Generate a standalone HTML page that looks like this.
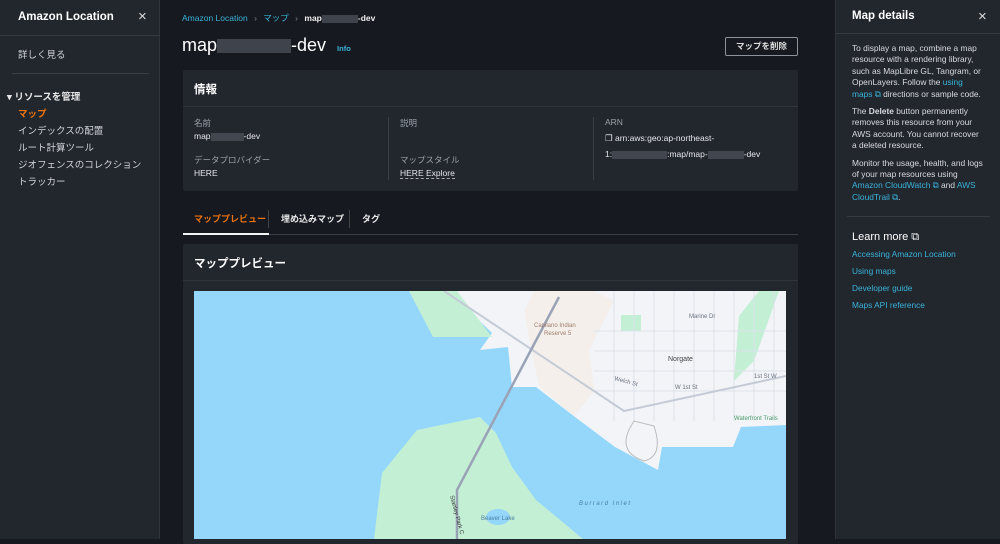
<!DOCTYPE html>
<html><head><meta charset="utf-8">
<style>
*{margin:0;padding:0;box-sizing:border-box}
body{width:1000px;height:539px;overflow:hidden;background:#16191f;font-family:"Liberation Sans","Noto Sans CJK JP",sans-serif;color:#d1d5db;position:relative}
.a{position:absolute;white-space:nowrap}
.side{position:absolute;left:0;top:0;width:160px;height:539px;background:#22262d;border-right:1px solid #2f343b}
.rp{position:absolute;left:835px;top:0;width:165px;height:539px;background:#22262d;border-left:1px solid #2f343b}
.card{position:absolute;background:#22262d;border-radius:2px}
.blur{display:inline-block;background:#4a4f57;height:8px;vertical-align:middle;opacity:.8}
.lk{color:#3ab4db}
.lbl{color:#9aa1ab;font-size:8.5px}
.val{color:#e6e8eb;font-size:8.5px}
</style></head><body>
<div class="side">
 <div class="a" style="left:18px;top:11px;font-size:11.5px;font-weight:bold;color:#fff">Amazon Location</div>
 <div class="a" style="left:138px;top:8px;font-size:15px;color:#ddd">×</div>
 <div class="a" style="left:0;top:35px;width:160px;height:1px;background:#353a42"></div>
 <div class="a" style="left:18px;top:47px;font-size:9.5px">詳しく見る</div>
 <div class="a" style="left:12px;top:73px;width:137px;height:1px;background:#3a3f47"></div>
 <div class="a" style="left:7px;top:89px;font-size:9.5px;font-weight:bold;color:#e8e8e8">▾ リソースを管理</div>
 <div class="a" style="left:18px;top:106px;font-size:9.5px;font-weight:bold;color:#ec7211">マップ</div>
 <div class="a" style="left:18px;top:123px;font-size:9.5px">インデックスの配置</div>
 <div class="a" style="left:18px;top:140px;font-size:9.5px">ルート計算ツール</div>
 <div class="a" style="left:18px;top:157px;font-size:9.5px">ジオフェンスのコレクション</div>
 <div class="a" style="left:18px;top:174px;font-size:9.5px">トラッカー</div>
</div>

<div class="a" style="left:182px;top:12px;font-size:8.5px"><span class="lk">Amazon Location</span> <span style="color:#888;margin:0 4px">›</span> <span class="lk">マップ</span> <span style="color:#888;margin:0 4px">›</span> <span style="color:#eee;font-weight:bold">map<span class="blur" style="width:36px"></span>-dev</span></div>
<div class="a" style="left:182px;top:35px;font-size:18px;color:#fff">map<span class="blur" style="width:74px;height:14px"></span>-dev <span style="font-size:7.5px;color:#3ab4db;font-weight:bold;margin-left:6px">Info</span></div>
<div class="a" style="left:725px;top:37px;width:73px;height:19px;border:1px solid #8d939b;border-radius:2px;font-size:8.5px;font-weight:bold;color:#ddd;text-align:center;line-height:17px">マップを削除</div>

<div class="card" style="left:183px;top:70px;width:615px;height:121px">
 <div class="a" style="left:11px;top:11px;font-size:11.5px;font-weight:bold;color:#fff">情報</div>
 <div class="a" style="left:0;top:36px;width:615px;height:1px;background:#30353c"></div>
 <div class="a lbl" style="left:11px;top:47px">名前</div>
 <div class="a val" style="left:11px;top:61px">map<span class="blur" style="width:33px"></span>-dev</div>
 <div class="a lbl" style="left:11px;top:84px">データプロバイダー</div>
 <div class="a val" style="left:11px;top:98px">HERE</div>
 <div class="a" style="left:205px;top:47px;width:1px;height:63px;background:#3a3f47"></div>
 <div class="a lbl" style="left:217px;top:47px">説明</div>
 <div class="a lbl" style="left:217px;top:84px">マップスタイル</div>
 <div class="a val" style="left:217px;top:98px;border-bottom:1px dashed #aaa">HERE Explore</div>
 <div class="a" style="left:410px;top:47px;width:1px;height:63px;background:#3a3f47"></div>
 <div class="a lbl" style="left:422px;top:47px">ARN</div>
 <div class="a val" style="left:422px;top:63px">❐ arn:aws:geo:ap-northeast-</div>
 <div class="a val" style="left:422px;top:79px">1:<span class="blur" style="width:55px"></span>:map/map-<span class="blur" style="width:36px"></span>-dev</div>
</div>

<div class="a" style="left:194px;top:212px;font-size:9px;font-weight:bold;color:#ec7211">マッププレビュー</div>
<div class="a" style="left:268px;top:210px;width:1px;height:18px;background:#444"></div>
<div class="a" style="left:281px;top:212px;font-size:9px;font-weight:bold;color:#e8e8e8">埋め込みマップ</div>
<div class="a" style="left:349px;top:210px;width:1px;height:18px;background:#444"></div>
<div class="a" style="left:362px;top:212px;font-size:9px;font-weight:bold;color:#e8e8e8">タグ</div>
<div class="a" style="left:183px;top:234px;width:615px;height:1px;background:#3a3f47"></div>
<div class="a" style="left:183px;top:233px;width:86px;height:2px;background:#f2f3f3"></div>

<div class="card" style="left:183px;top:244px;width:615px;height:300px">
 <div class="a" style="left:11px;top:11px;font-size:11.5px;font-weight:bold;color:#fff">マッププレビュー</div>
 <div class="a" style="left:0;top:36px;width:615px;height:1px;background:#30353c"></div>
</div>
<svg class="a" style="left:194px;top:291px" width="592" height="248" viewBox="0 0 592 248">
 <rect width="592" height="248" fill="#94d7fb"/>
 <polygon points="255,0 298,42 286,59 314,56 318,96 342,96 381,126 421,156 464,179 468,156 539,156 547,136 592,134 592,0" fill="#f2f4f7"/>
 <polygon points="330,20 345,95 380,125 400,100 395,60 420,10 400,0 340,0" fill="#f4efea"/>
 <polygon points="215,0 239,46 298,46 263,0" fill="#c3efd5"/>
 <polygon points="223,139 286,126 302,142 318,176 342,209 389,248 180,248 188,182" fill="#c3efd5"/>
 <polygon points="545,25 565,0 585,0 560,70 540,90" fill="#c3efd5"/>
 <rect x="427" y="24" width="20" height="16" fill="#c3efd5"/>
 <ellipse cx="304" cy="226" rx="12" ry="8" fill="#94d7fb"/>
 <g stroke="#dde3eb" stroke-width="1" fill="none">
  <path d="M400 40 H592 M400 60 H592 M400 80 H592 M400 100 H592 M420 0 V130 M440 0 V130 M460 0 V130 M480 0 V130 M500 0 V130 M520 0 V130 M540 0 V130 M560 0 V130 M580 0 V130"/>
 </g>
 <path d="M250 0 L430 120 L592 85" stroke="#c4cbd6" stroke-width="2" fill="none"/>
 <path d="M365 6 L263 199 L263 248" stroke="#9aa3b5" stroke-width="2.5" fill="none"/>
 <path d="M440 130 Q420 160 450 170 Q470 165 460 135 Z" stroke="#bbb" fill="none"/>
 <g font-family="Liberation Sans,sans-serif" font-size="6" fill="#6b7280">
  <text x="495" y="27">Marine Dr</text>
  <text x="474" y="70" font-size="7" fill="#444">Norgate</text>
  <text x="420" y="89" transform="rotate(15 420 89)">Welch St</text>
  <text x="481" y="98">W 1st St</text>
  <text x="560" y="87">1st St W</text>
  <text x="540" y="129" fill="#4a9a6a">Waterfront Trails</text>
  <text x="340" y="36" fill="#a08070">Capilano Indian</text>
  <text x="350" y="44" fill="#a08070">Reserve 5</text>
  <text x="385" y="214" fill="#4a7ea0" letter-spacing="1.5" font-style="italic">Burrard Inlet</text>
  <text x="287" y="229" fill="#4a7ea0">Beaver Lake</text>
  <text x="256" y="205" fill="#333" transform="rotate(75 256 205)">Stanley Park C</text>
 </g>
</svg>

<div class="rp">
 <div class="a" style="left:16px;top:10px;font-size:11.5px;font-weight:bold;color:#fff">Map details</div>
 <div class="a" style="left:142px;top:8px;font-size:15px;color:#ddd">×</div>
 <div class="a" style="left:0;top:33px;width:165px;height:1px;background:#353a42"></div>
 <div class="a" style="left:16px;top:43px;width:133px;white-space:normal;font-size:8.4px;line-height:11.4px;color:#d8dbe0">To display a map, combine a map resource with a rendering library, such as MapLibre GL, Tangram, or OpenLayers. Follow the <span class="lk">using maps ⧉</span> directions or sample code.
 <div style="margin-top:6px">The <b>Delete</b> button permanently removes this resource from your AWS account. You cannot recover a deleted resource.</div>
 <div style="margin-top:6px">Monitor the usage, health, and logs of your map resources using <span class="lk">Amazon CloudWatch ⧉</span> and <span class="lk">AWS CloudTrail ⧉</span>.</div></div>
 <div class="a" style="left:11px;top:216px;width:143px;height:1px;background:#353a42"></div>
 <div class="a" style="left:16px;top:231px;font-size:11px;color:#fff">Learn more ⧉</div>
 <div class="a lk" style="left:16px;top:249px;font-size:8.3px">Accessing Amazon Location</div>
 <div class="a lk" style="left:16px;top:266px;font-size:8.3px">Using maps</div>
 <div class="a lk" style="left:16px;top:283px;font-size:8.3px">Developer guide</div>
 <div class="a lk" style="left:16px;top:300px;font-size:8.3px">Maps API reference</div>
</div>
</body></html>
